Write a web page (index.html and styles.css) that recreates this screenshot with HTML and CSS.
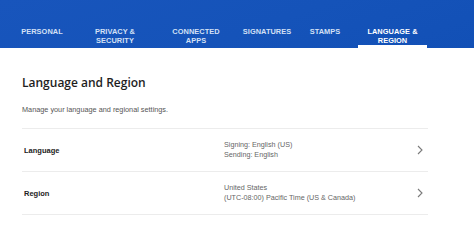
FILE: index.html
```html
<!DOCTYPE html>
<html lang="en">
<head>
<meta charset="utf-8">
<title>Language and Region</title>
<link rel="stylesheet" href="styles.css">
</head>
<body>
<header class="topbar">
  <nav class="tabs">
    <a class="tab">PERSONAL</a>
    <a class="tab">PRIVACY &amp;<br>SECURITY</a>
    <a class="tab">CONNECTED<br>APPS</a>
    <a class="tab">SIGNATURES</a>
    <a class="tab tab-stamps">STAMPS</a>
    <a class="tab active">LANGUAGE &amp;<br>REGION</a>
  </nav>
</header>
<main class="content">
  <h1 class="title">Language and Region</h1>
  <p class="desc">Manage your language and regional settings.</p>
  <div class="list">
    <div class="row">
      <div class="label">Language</div>
      <div class="value">Signing: English (US)<br>Sending: English</div>
      <svg class="chev" width="6" height="10" viewBox="0 0 6 10"><path d="M1 1 L5 5 L1 9" fill="none" stroke="#7a7a7a" stroke-width="1.1"/></svg>
    </div>
    <div class="row">
      <div class="label">Region</div>
      <div class="value">United States<br>(UTC-08:00) Pacific Time (US &amp; Canada)</div>
      <svg class="chev" width="6" height="10" viewBox="0 0 6 10"><path d="M1 1 L5 5 L1 9" fill="none" stroke="#7a7a7a" stroke-width="1.1"/></svg>
    </div>
  </div>
</main>
</body>
</html>
```

FILE: styles.css
```css
html, body {
  margin: 0;
  padding: 0;
  background: #ffffff;
  font-family: "Liberation Sans", Arial, sans-serif;
}

.topbar {
  height: 48px;
  background: linear-gradient(160deg, #1855bc 0%, #1553b9 55%, #1250b6 100%);
}

.tabs {
  display: grid;
  grid-template-columns: 68px 78px 84px 58px 62px 69px;
  height: 48px;
  padding-left: 8px;
}

.tab {
  box-sizing: border-box;
  height: 48px;
  padding-top: 27px;
  font-size: 7.4px;
  font-weight: 700;
  line-height: 9px;
  letter-spacing: 0.05px;
  text-align: center;
  white-space: nowrap;
  color: #d3e0f5;
}

.tab-stamps {
  padding-right: 4px;
}

.tab.active {
  color: #ffffff;
  box-shadow: inset 0 -3px 0 #ffffff;
}

.content {
  padding: 0 46px 0 22px;
}

.title {
  margin: 27px 0 0;
  font-family: "Open Sans", "Liberation Sans", sans-serif;
  font-size: 12px;
  font-weight: 600;
  line-height: 16px;
  color: #1e1e1e;
}

.desc {
  margin: 14px 0 0;
  font-size: 7.3px;
  line-height: 9px;
  color: #555555;
}

.list {
  margin-top: 14px;
  border-top: 1px solid #ececec;
}

.row {
  display: grid;
  grid-template-columns: 200px 1fr auto;
  align-items: center;
  height: 42px;
  padding: 0 5px 0 2px;
  border-bottom: 1px solid #ececec;
}

.label {
  font-size: 7.5px;
  font-weight: 700;
  color: #222222;
}

.value {
  font-size: 7.2px;
  line-height: 10.5px;
  color: #666666;
}

.chev {
  display: block;
}
```
